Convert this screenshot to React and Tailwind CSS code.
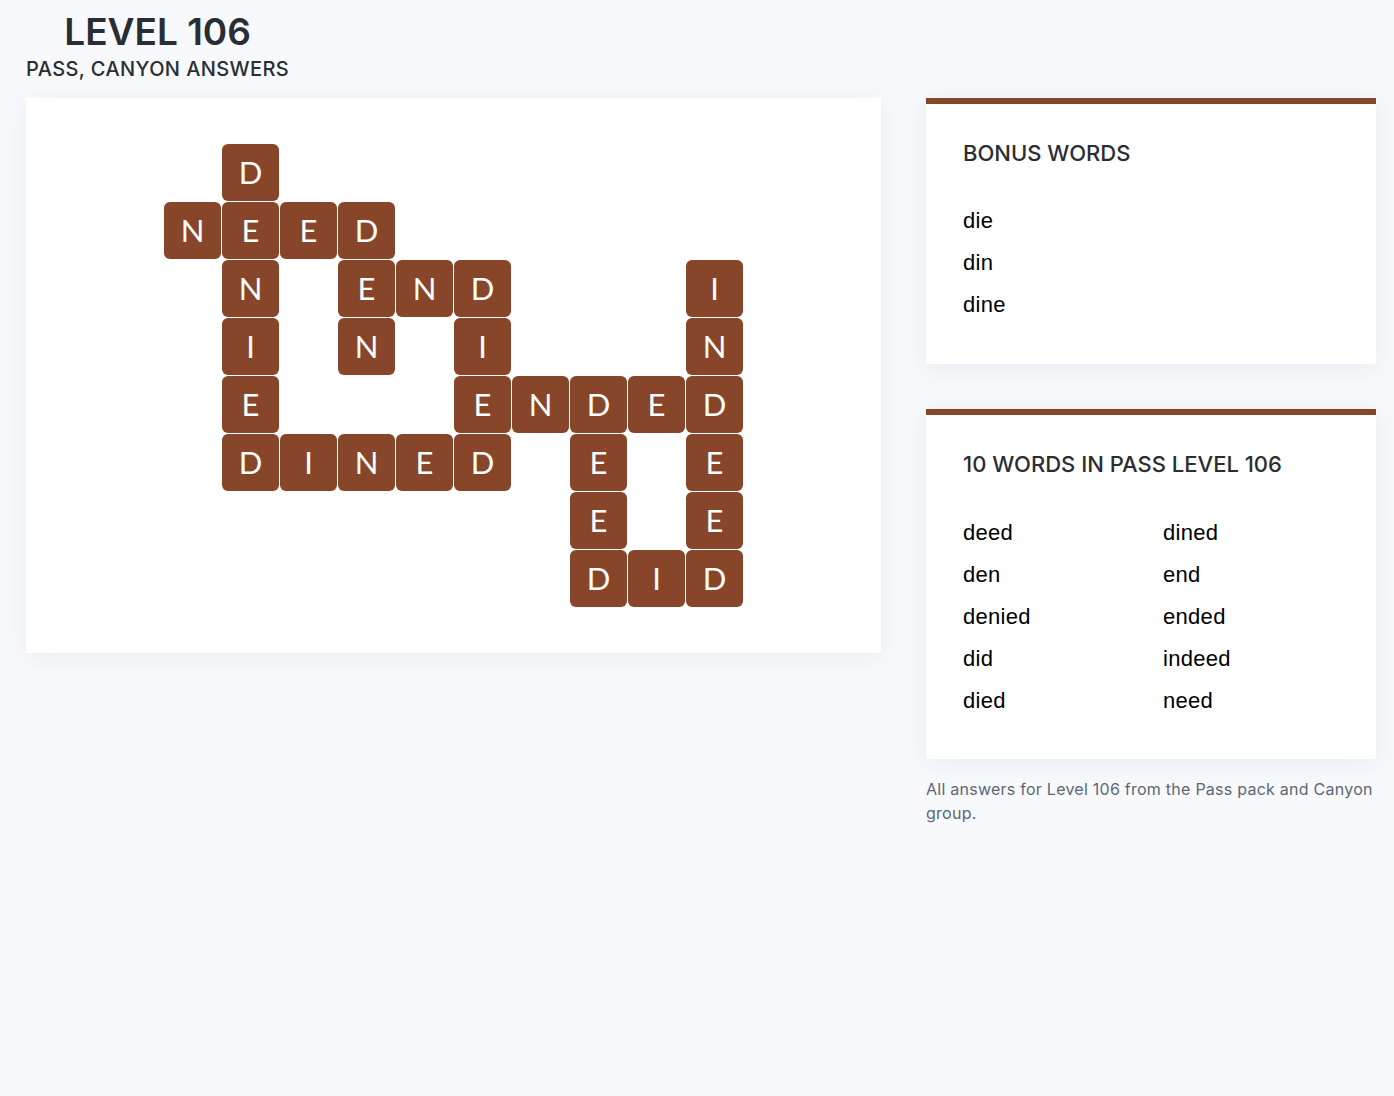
import React from "react";

const ROWS = [
  " D        ",
  "NEED      ",
  " N END   I",
  " I N I   N",
  " E   ENDED",
  " DINED E E",
  "       E E",
  "       DID",
];

const bonus = ["die", "din", "dine"];
const words = ["deed", "dined", "den", "end", "denied", "ended", "did", "indeed", "died", "need"];

function Tile({ letter }) {
  if (letter === " ") return <div className="w-[57px] h-[57px]" />;
  return (
    <div className="w-[57px] h-[57px] rounded-[6px] bg-[#874529] flex items-center justify-center text-white text-[31px] font-['Lato',sans-serif]">
      {letter}
    </div>
  );
}

export default function App() {
  return (
    <div className="min-h-screen bg-[#f7f9fc] font-['Inter',sans-serif] pl-[26px] pt-[12px]">
      <div className="inline-flex flex-col items-center text-[#2a2d33]">
        <h1 className="text-[37px] leading-[40px] font-semibold">LEVEL 106</h1>
        <p className="mt-[3px] text-[20px] leading-[28px] font-medium tracking-[0.4px]">PASS, CANYON ANSWERS</p>
      </div>

      <div className="flex items-start gap-[45px] mt-[15px]">
        <div className="w-[855px] bg-white shadow-[0_4px_24px_rgba(30,50,90,0.06)] flex justify-center py-[46px]">
          <div className="grid grid-cols-[repeat(10,57px)] gap-[1px]">
            {ROWS.map((row, r) =>
              row.split("").map((ch, c) => <Tile key={r + "-" + c} letter={ch} />)
            )}
          </div>
        </div>

        <div className="w-[450px] flex flex-col">
          <div className="bg-white border-t-[6px] border-[#874529] shadow-[0_4px_24px_rgba(30,50,90,0.07)] pl-[37px] pt-[35px] pb-[38px]">
            <h2 className="text-[22px] leading-[28px] font-medium text-[#2a2d33]">BONUS WORDS</h2>
            <ul className="mt-[33px] font-['Liberation_Sans',sans-serif] text-[22px] tracking-[0.3px] text-black">
              {bonus.map((w) => (
                <li key={w} className="leading-[42px]">{w}</li>
              ))}
            </ul>
          </div>

          <div className="mt-[45px] bg-white border-t-[6px] border-[#874529] shadow-[0_4px_24px_rgba(30,50,90,0.07)] pl-[37px] pt-[35px] pb-[37px]">
            <h2 className="text-[22px] leading-[28px] font-medium text-[#2a2d33]">10 WORDS IN PASS LEVEL 106</h2>
            <ul className="mt-[34px] grid grid-cols-[200px_1fr] font-['Liberation_Sans',sans-serif] text-[22px] tracking-[0.3px] text-black">
              {words.map((w) => (
                <li key={w} className="leading-[42px]">{w}</li>
              ))}
            </ul>
          </div>

          <p className="mt-[18px] text-[16px] leading-[24px] tracking-[0.25px] text-[#5b6777]">
            All answers for Level 106 from the Pass pack and Canyon group.
          </p>
        </div>
      </div>
    </div>
  );
}
